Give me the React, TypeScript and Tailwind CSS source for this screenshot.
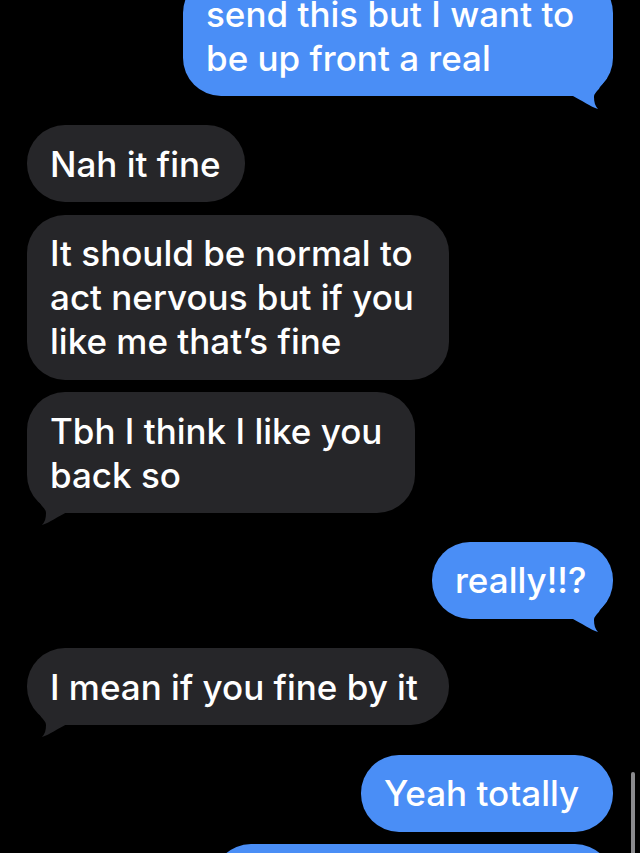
import React from 'react';

type Side = 'me' | 'them';

const Tail: React.FC<{ side: Side }> = ({ side }) => (
  <svg
    width="40"
    height="31"
    viewBox="0 0 40 31"
    className={
      side === 'me'
        ? 'absolute right-0 bottom-[-13px] fill-[#4a8ef6]'
        : 'absolute left-0 bottom-[-12px] -scale-x-100 fill-[#262629]'
    }
  >
    <path d="M0 0 H34 L27 9 C25 13 21 15 21 19 C21 24 22 28 25 31 C18 29 8 22 0 18 Z" />
  </svg>
);

const Bubble: React.FC<{
  side: Side;
  width: string;
  lines: string[];
  tail?: boolean;
  className?: string;
}> = ({ side, width, lines, tail, className = '' }) => (
  <div
    className={`relative rounded-[38px] py-[16.5px] pl-[23px] text-[35px] font-medium leading-[44px] tracking-normal text-white whitespace-nowrap ${
      side === 'me' ? 'self-end bg-[#4a8ef6]' : 'self-start bg-[#262629]'
    } ${width} ${className}`}
  >
    {lines.map((l, i) => (
      <span key={i} className="relative z-10 block">
        {l}
      </span>
    ))}
    {tail && <Tail side={side} />}
  </div>
);

export default function App() {
  return (
    <div className="relative h-[853px] w-[640px] overflow-hidden bg-black font-['Inter','Noto_Sans',sans-serif]">
      <div className="flex flex-col px-[27px]">
        <Bubble
          side="me"
          width="w-[430px]"
          lines={['send this but I want to', 'be up front a real']}
          tail
          className="-mt-[25px]"
        />
        <Bubble side="them" width="w-[218px]" lines={['Nah it fine']} className="mt-[29px]" />
        <Bubble
          side="them"
          width="w-[422px]"
          lines={['It should be normal to', 'act nervous but if you', 'like me that’s fine']}
          className="mt-[12.5px]"
        />
        <Bubble
          side="them"
          width="w-[388px]"
          lines={['Tbh I think I like you', 'back so']}
          tail
          className="mt-[12.5px]"
        />
        <Bubble side="me" width="w-[181px]" lines={['really!!?']} tail className="mt-[28.5px]" />
        <Bubble
          side="them"
          width="w-[422px]"
          lines={['I mean if you fine by it']}
          tail
          className="mt-[29.5px]"
        />
        <Bubble side="me" width="w-[252px]" lines={['Yeah totally']} className="mt-[29.5px]" />
        <div className="mt-[12.5px] h-[120px] w-[400px] self-end rounded-[38px] bg-[#4a8ef6]" />
      </div>

      {/* scroll indicator */}
      <div className="absolute right-[5px] top-[772px] h-[100px] w-[4px] rounded-full bg-[#8a8a8d]" />
    </div>
  );
}
